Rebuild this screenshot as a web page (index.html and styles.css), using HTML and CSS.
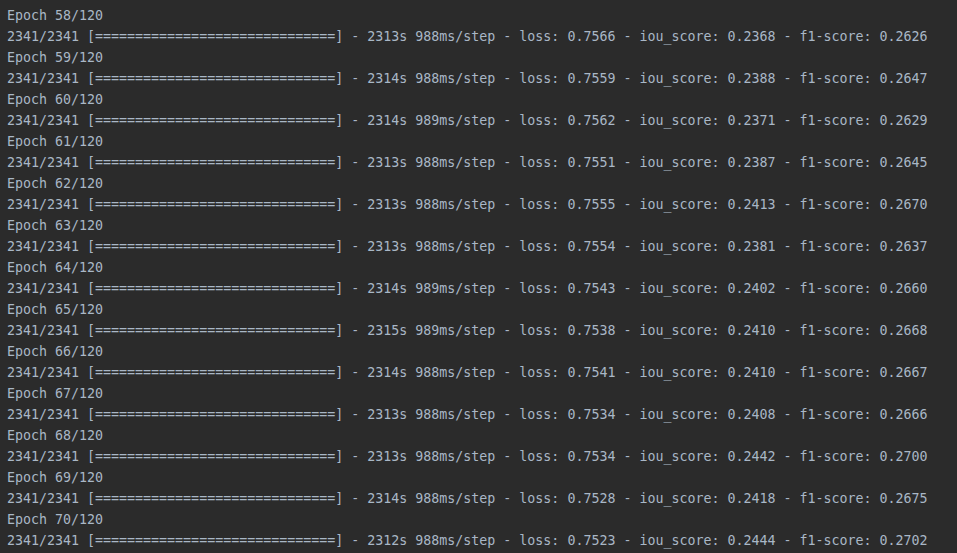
FILE: index.html
```html
<!DOCTYPE html>
<html lang="en">
<head>
    <meta charset="UTF-8">
    <title>Run</title>
    <link rel="stylesheet" href="styles.css">
</head>
<body>
    <pre class="console">Epoch 58/120
2341/2341 [==============================] - 2313s 988ms/step - loss: 0.7566 - iou_score: 0.2368 - f1-score: 0.2626
Epoch 59/120
2341/2341 [==============================] - 2314s 988ms/step - loss: 0.7559 - iou_score: 0.2388 - f1-score: 0.2647
Epoch 60/120
2341/2341 [==============================] - 2314s 989ms/step - loss: 0.7562 - iou_score: 0.2371 - f1-score: 0.2629
Epoch 61/120
2341/2341 [==============================] - 2313s 988ms/step - loss: 0.7551 - iou_score: 0.2387 - f1-score: 0.2645
Epoch 62/120
2341/2341 [==============================] - 2313s 988ms/step - loss: 0.7555 - iou_score: 0.2413 - f1-score: 0.2670
Epoch 63/120
2341/2341 [==============================] - 2313s 988ms/step - loss: 0.7554 - iou_score: 0.2381 - f1-score: 0.2637
Epoch 64/120
2341/2341 [==============================] - 2314s 989ms/step - loss: 0.7543 - iou_score: 0.2402 - f1-score: 0.2660
Epoch 65/120
2341/2341 [==============================] - 2315s 989ms/step - loss: 0.7538 - iou_score: 0.2410 - f1-score: 0.2668
Epoch 66/120
2341/2341 [==============================] - 2314s 988ms/step - loss: 0.7541 - iou_score: 0.2410 - f1-score: 0.2667
Epoch 67/120
2341/2341 [==============================] - 2313s 988ms/step - loss: 0.7534 - iou_score: 0.2408 - f1-score: 0.2666
Epoch 68/120
2341/2341 [==============================] - 2313s 988ms/step - loss: 0.7534 - iou_score: 0.2442 - f1-score: 0.2700
Epoch 69/120
2341/2341 [==============================] - 2314s 988ms/step - loss: 0.7528 - iou_score: 0.2418 - f1-score: 0.2675
Epoch 70/120
2341/2341 [==============================] - 2312s 988ms/step - loss: 0.7523 - iou_score: 0.2444 - f1-score: 0.2702</pre>
</body>
</html>
```
FILE: styles.css
```css
html, body {
  margin: 0;
  padding: 0;
  background-color: #2b2b2b;
  height: 100%;
  overflow: hidden;
}
.console {
  margin: 0;
  padding: 5px 7px;
  font-family: "DejaVu Sans Mono", "Liberation Mono", monospace;
  font-size: 13.3px;
  line-height: 21px;
  color: #a9b7c6;
  white-space: pre;
}
```
